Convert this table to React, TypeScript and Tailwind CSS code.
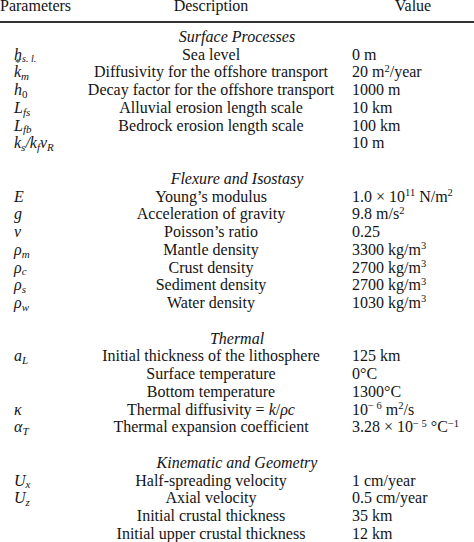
import React from "react";

type Row = { sym?: React.ReactNode; desc?: React.ReactNode; val?: React.ReactNode };
type Section = { title: string; rows: Row[] };

const Sb = ({ children, up = false }: { children: React.ReactNode; up?: boolean }) => (
  <sub className={`text-[11px] ${up ? "not-italic" : ""}`}>{children}</sub>
);
const Sp = ({ children }: { children: React.ReactNode }) => (
  <sup className="text-[10.5px] top-[-0.55em]">{children}</sup>
);

const sections: Section[] = [
  {
    title: "Surface Processes",
    rows: [
      { sym: <>h<Sb><span className="text-[10px]">s. l.</span></Sb></>, desc: "Sea level", val: "0 m" },
      {
        sym: (
          <span className="relative inline-block">
            <span className="absolute left-[1px] top-[-9px] text-[11px] not-italic">*</span>k<Sb>m</Sb>
          </span>
        ),
        desc: "Diffusivity for the offshore transport",
        val: <>20 m<Sp>2</Sp>/year</>,
      },
      { sym: <>h<Sb up>0</Sb></>, desc: "Decay factor for the offshore transport", val: "1000 m" },
      { sym: <>L<Sb>fs</Sb></>, desc: "Alluvial erosion length scale", val: "10 km" },
      { sym: <>L<Sb>fb</Sb></>, desc: "Bedrock erosion length scale", val: "100 km" },
      { sym: <>k<Sb>s</Sb>/k<Sb>f</Sb>ν<Sb>R</Sb></>, val: "10 m" },
    ],
  },
  {
    title: "Flexure and Isostasy",
    rows: [
      { sym: "E", desc: "Young’s modulus", val: <>1.0 × 10<Sp>11</Sp> N/m<Sp>2</Sp></> },
      { sym: "g", desc: "Acceleration of gravity", val: <>9.8 m/s<Sp>2</Sp></> },
      { sym: "ν", desc: "Poisson’s ratio", val: "0.25" },
      { sym: <>ρ<Sb>m</Sb></>, desc: "Mantle density", val: <>3300 kg/m<Sp>3</Sp></> },
      { sym: <>ρ<Sb>c</Sb></>, desc: "Crust density", val: <>2700 kg/m<Sp>3</Sp></> },
      { sym: <>ρ<Sb>s</Sb></>, desc: "Sediment density", val: <>2700 kg/m<Sp>3</Sp></> },
      { sym: <>ρ<Sb>w</Sb></>, desc: "Water density", val: <>1030 kg/m<Sp>3</Sp></> },
    ],
  },
  {
    title: "Thermal",
    rows: [
      { sym: <>a<Sb>L</Sb></>, desc: "Initial thickness of the lithosphere", val: "125 km" },
      { desc: "Surface temperature", val: "0°C" },
      { desc: "Bottom temperature", val: "1300°C" },
      {
        sym: "κ",
        desc: <>Thermal diffusivity = <span className="italic">k</span>/<span className="italic">ρc</span></>,
        val: <>10<Sp>−&nbsp;6</Sp> m<Sp>2</Sp>/s</>,
      },
      {
        sym: <>α<Sb>T</Sb></>,
        desc: "Thermal expansion coefficient",
        val: <>3.28 × 10<Sp>−&nbsp;5</Sp> °C<Sp>−1</Sp></>,
      },
    ],
  },
  {
    title: "Kinematic and Geometry",
    rows: [
      { sym: <>U<Sb>x</Sb></>, desc: "Half-spreading velocity", val: "1 cm/year" },
      { sym: <>U<Sb>z</Sb></>, desc: "Axial velocity", val: "0.5 cm/year" },
      { desc: "Initial crustal thickness", val: "35 km" },
      { desc: "Initial upper crustal thickness", val: "12 km" },
    ],
  },
];

const rowCls = "grid grid-cols-[70px_282px_122px] h-[17.76px] leading-[17.76px] whitespace-nowrap";

export default function App() {
  return (
    <div
      className="w-[474px] h-[542px] overflow-hidden bg-white text-[#141414] text-[16px]"
      style={{ fontFamily: '"Liberation Serif", "Times New Roman", serif' }}
    >
      <div className={`${rowCls} mt-[-3.3px]`}>
        <div className="text-left">Parameters</div>
        <div className="text-center">Description</div>
        <div className="text-center">Value</div>
      </div>
      <div className="mt-[6.6px] h-[2px] bg-[#333]" />
      <div className="mt-[4.84px] flex flex-col">
        {sections.map((s, si) => (
          <div key={s.title} className="flex flex-col">
            {si > 0 && <div className="h-[17.76px]" />}
            <div className="h-[17.76px] leading-[17.76px] text-center italic">{s.title}</div>
            {s.rows.map((r, ri) => (
              <div key={ri} className={rowCls}>
                <div className="pl-[14px] italic">{r.sym}</div>
                <div className="text-center">{r.desc}</div>
                <div className="text-left">{r.val}</div>
              </div>
            ))}
          </div>
        ))}
      </div>
    </div>
  );
}
